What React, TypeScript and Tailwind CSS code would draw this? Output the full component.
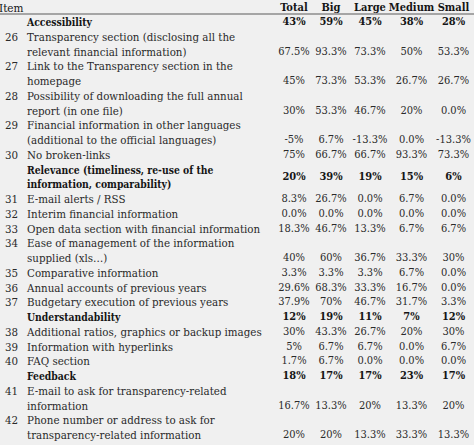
type Row = {
  num?: string
  lines: string[]
  values: string[]
  cat?: boolean
}

const rows: Row[] = [
  { cat: true, lines: ["Accessibility"], values: ["43%", "59%", "45%", "38%", "28%"] },
  { num: "26", lines: ["Transparency section (disclosing all the", "relevant financial information)"], values: ["67.5%", "93.3%", "73.3%", "50%", "53.3%"] },
  { num: "27", lines: ["Link to the Transparency section in the", "homepage"], values: ["45%", "73.3%", "53.3%", "26.7%", "26.7%"] },
  { num: "28", lines: ["Possibility of downloading the full annual", "report (in one file)"], values: ["30%", "53.3%", "46.7%", "20%", "0.0%"] },
  { num: "29", lines: ["Financial information in other languages", "(additional to the official languages)"], values: ["-5%", "6.7%", "-13.3%", "0.0%", "-13.3%"] },
  { num: "30", lines: ["No broken-links"], values: ["75%", "66.7%", "66.7%", "93.3%", "73.3%"] },
  { cat: true, lines: ["Relevance (timeliness, re-use of the", "information, comparability)"], values: ["20%", "39%", "19%", "15%", "6%"] },
  { num: "31", lines: ["E-mail alerts / RSS"], values: ["8.3%", "26.7%", "0.0%", "6.7%", "0.0%"] },
  { num: "32", lines: ["Interim financial information"], values: ["0.0%", "0.0%", "0.0%", "0.0%", "0.0%"] },
  { num: "33", lines: ["Open data section with financial information"], values: ["18.3%", "46.7%", "13.3%", "6.7%", "6.7%"] },
  { num: "34", lines: ["Ease of management of the information", "supplied (xls…)"], values: ["40%", "60%", "36.7%", "33.3%", "30%"] },
  { num: "35", lines: ["Comparative information"], values: ["3.3%", "3.3%", "3.3%", "6.7%", "0.0%"] },
  { num: "36", lines: ["Annual accounts of previous years"], values: ["29.6%", "68.3%", "33.3%", "16.7%", "0.0%"] },
  { num: "37", lines: ["Budgetary execution of previous years"], values: ["37.9%", "70%", "46.7%", "31.7%", "3.3%"] },
  { cat: true, lines: ["Understandability"], values: ["12%", "19%", "11%", "7%", "12%"] },
  { num: "38", lines: ["Additional ratios, graphics or backup images"], values: ["30%", "43.3%", "26.7%", "20%", "30%"] },
  { num: "39", lines: ["Information with hyperlinks"], values: ["5%", "6.7%", "6.7%", "0.0%", "6.7%"] },
  { num: "40", lines: ["FAQ section"], values: ["1.7%", "6.7%", "0.0%", "0.0%", "0.0%"] },
  { cat: true, lines: ["Feedback"], values: ["18%", "17%", "17%", "23%", "17%"] },
  { num: "41", lines: ["E-mail to ask for transparency-related", "information"], values: ["16.7%", "13.3%", "20%", "13.3%", "20%"] },
  { num: "42", lines: ["Phone number or address to ask for", "transparency-related information"], values: ["20%", "20%", "13.3%", "33.3%", "13.3%"] },
]

const cols = "grid grid-cols-[27px_249px_36px_38px_40px_43px_41px]"
const serif = "font-['DejaVu_Serif',serif]"
const cond = "font-['DejaVu_Serif_Condensed','DejaVu_Serif',serif]"

export default function App() {
  return (
    <div className="w-[474px] h-[445px] overflow-hidden bg-[#f0f0f0] text-[#2a2a2a] leading-[14.75px]">
      <div className={`${cols} h-[15px] pt-[1px] leading-[14px] border-b-2 border-[#a5a5a5] text-[#151515] ${cond} text-[11px]`}>
        <div className={`col-span-2 -ml-[1px] whitespace-nowrap ${serif} text-[10.5px]`}>Item</div>
        {["Total", "Big", "Large", "Medium", "Small"].map((h) => (
          <div key={h} className="flex justify-center font-bold whitespace-nowrap">{h}</div>
        ))}
      </div>

      {rows.map((r, i) => (
        <div key={i} className={`${cols} ${r.cat ? "items-center font-bold text-[#151515]" : "items-end"}`}>
          <div className={`self-start pl-[5px] ${serif} text-[10.3px]`}>{r.num}</div>
          <div className={`whitespace-nowrap ${r.cat ? `${cond} text-[10.3px]` : `${serif} text-[10.3px]`}`}>
            {r.lines.map((l) => (
              <div key={l}>{l}</div>
            ))}
          </div>
          {r.values.map((v, j) => (
            <div key={j} className={`flex justify-center whitespace-nowrap ${cond} text-[11px]`}>{v}</div>
          ))}
        </div>
      ))}
    </div>
  )
}
